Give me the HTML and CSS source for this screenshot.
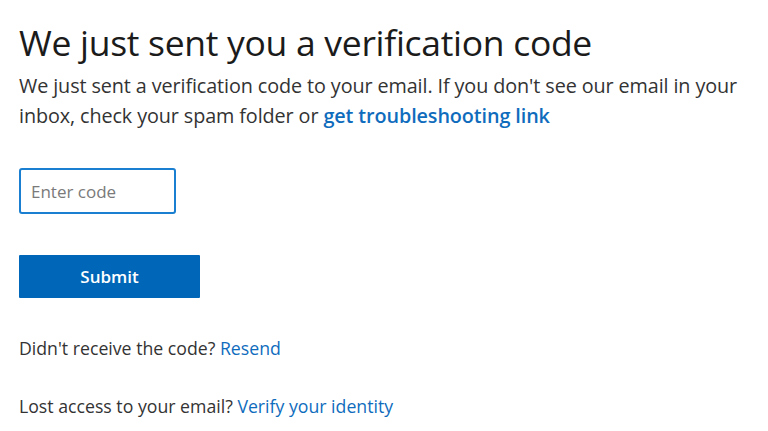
FILE: index.html
```html
<!DOCTYPE html>
<html>
<head>
<meta charset="utf-8">
<link rel="stylesheet" href="styles.css">
</head>
<body>
<main class="page">
  <h1 class="title">We just sent you a verification code</h1>
  <p class="desc">We just sent a verification code to your email. If you don't see our email in your inbox, check your spam folder or <a class="link strong" href="#">get troubleshooting link</a></p>
  <div class="field"><input class="code" type="text" placeholder="Enter code"></div>
  <button class="submit" type="button">Submit</button>
  <p class="note">Didn't receive the code? <a class="link" href="#">Resend</a></p>
  <p class="note">Lost access to your email? <a class="link" href="#">Verify your identity</a></p>
</main>
</body>
</html>
```
FILE: styles.css
```css
html, body { margin: 0; padding: 0; background: #fff; }
body { font-family: "Open Sans", "Noto Sans", sans-serif; color: #262626; }
.page { padding: 18px 20px 0 19px; width: 728px; }
.title { margin: 0; font-size: 35.5px; font-weight: 400; line-height: 48px; color: #1b1b1b; letter-spacing: -0.3px; }
.desc { margin: 5px 0 0; font-size: 19.8px; line-height: 30px; color: #333; letter-spacing: -0.1px; }
.link { color: #0f6cbd; text-decoration: none; }
.strong { font-weight: 600; }
.field { margin-top: 37px; }
.code { box-sizing: border-box; width: 157px; height: 46px; border: 2px solid #1a7fd0; border-radius: 3px; padding: 0 10px; font: 17px "Open Sans", sans-serif; color: #333; outline: none; }
.code::placeholder { color: #7a7a7a; }
.submit { display: block; margin-top: 41px; width: 181px; height: 43px; border: 0; border-radius: 1px; background: #0067b8; color: #fff; font: 600 17px "Open Sans", sans-serif; cursor: pointer; }
.note { margin: 0; font-size: 17.7px; line-height: 24px; color: #333; }
.submit + .note { margin-top: 38px; }
.note + .note { margin-top: 34px; }
```
